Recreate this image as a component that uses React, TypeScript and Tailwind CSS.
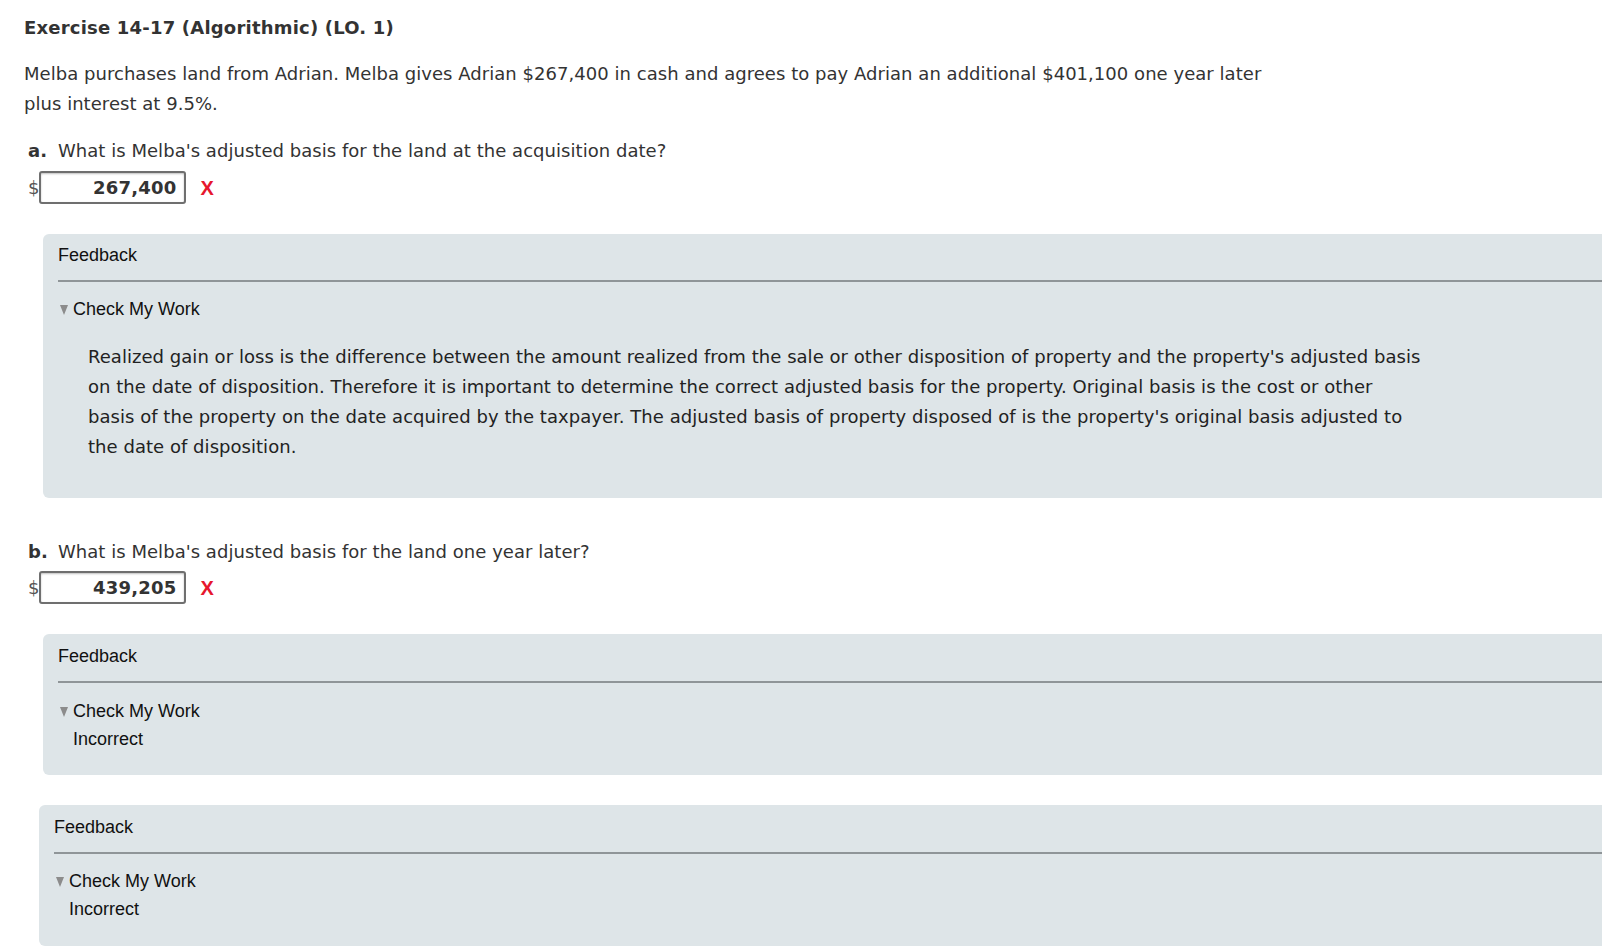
import React from "react";

const verdana = "font-['Verdana','DejaVu_Sans',sans-serif]";
const helv = "font-['Helvetica','Liberation_Sans',Arial,sans-serif]";

function Caret() {
  return (
    <svg width="8" height="10" viewBox="0 0 8 10" className="mr-[5px] mt-[1px] shrink-0">
      <polygon points="0,0 8,0 4,10" fill="#8c8c8c" />
    </svg>
  );
}

function AnswerInput({ value }: { value: string }) {
  return (
    <div className="flex items-center">
      <span className={`${verdana} text-[18px] text-[#555]`}>$</span>
      <div
        className={`${verdana} w-[147px] h-[33px] rounded-[3px] border-2 border-[#6f6f6f] bg-white shadow-[inset_0_1px_2px_rgba(0,0,0,0.25)] flex items-center justify-end pr-[8px] text-[18px] font-bold text-[#333] tracking-[0.2px]`}
      >
        {value}
      </div>
      <span className={`${helv} ml-[14px] text-[20px] font-bold text-[#e6172d]`}>X</span>
    </div>
  );
}

function Feedback({
  box,
  checkGap,
  children,
}: {
  box: string;
  checkGap: string;
  children: React.ReactNode;
}) {
  return (
    <div className={`${box} -mr-[40px] rounded-[6px] bg-[#dee5e8] pl-[15px]`}>
      <div className={`${helv} text-[18px] leading-[24px] text-[#111]`}>Feedback</div>
      <div className="mt-[13px] h-[2px] bg-[#8f9598]" />
      <div className={`${helv} ${checkGap} flex items-center text-[18px] leading-[28px] text-[#111]`}>
        <span className="ml-[2px]"></span>
        <Caret />
        Check My Work
      </div>
      {children}
    </div>
  );
}

export default function App() {
  return (
    <div className="min-h-[952px] w-full overflow-hidden bg-white pl-[24px] pt-[16px] text-[#333]">
      <h1 className={`${verdana} text-[18px] font-bold leading-[24px] tracking-[0.2px] text-[#333]`}>
        Exercise 14-17 (Algorithmic) (LO. 1)
      </h1>

      <p className={`${verdana} mt-[19px] text-[18px] leading-[30px] tracking-[0.04px] text-[#333]`}>
        Melba purchases land from Adrian. Melba gives Adrian $267,400 in cash and agrees to pay Adrian an additional $401,100 one year later
        <br />
        plus interest at 9.5%.
      </p>

      <div className={`${verdana} mt-[17px] pl-[4px] text-[18px] leading-[30px] tracking-[0.04px] text-[#333]`}>
        <span className="inline-block w-[30px] font-bold">a.</span>
        What is Melba's adjusted basis for the land at the acquisition date?
      </div>
      <div className="mt-[5px] pl-[4px]">
        <AnswerInput value="267,400" />
      </div>

      <div className="mt-[30px]">
        <Feedback box="ml-[19px] pt-[9px] pb-[36px]" checkGap="mt-[13px]">
          <div className={`${verdana} mt-[19px] pl-[30px] text-[18px] leading-[30px] tracking-[0.04px] text-[#222]`}>
            Realized gain or loss is the difference between the amount realized from the sale or other disposition of property and the property's adjusted basis
            <br />
            on the date of disposition. Therefore it is important to determine the correct adjusted basis for the property. Original basis is the cost or other
            <br />
            basis of the property on the date acquired by the taxpayer. The adjusted basis of property disposed of is the property's original basis adjusted to
            <br />
            the date of disposition.
          </div>
        </Feedback>
      </div>

      <div className={`${verdana} mt-[39px] pl-[4px] text-[18px] leading-[30px] tracking-[0.04px] text-[#333]`}>
        <span className="inline-block w-[30px] font-bold">b.</span>
        What is Melba's adjusted basis for the land one year later?
      </div>
      <div className="mt-[4px] pl-[4px]">
        <AnswerInput value="439,205" />
      </div>

      <div className="mt-[30px]">
        <Feedback box="ml-[19px] pt-[10px] pb-[22px]" checkGap="mt-[14px]">
          <div className={`${helv} pl-[15px] text-[18px] leading-[28px] text-[#111]`}>Incorrect</div>
        </Feedback>
      </div>

      <div className="mt-[30px]">
        <Feedback box="ml-[15px] pt-[10px] pb-[23px]" checkGap="mt-[13px]">
          <div className={`${helv} pl-[15px] text-[18px] leading-[28px] text-[#111]`}>Incorrect</div>
        </Feedback>
      </div>
    </div>
  );
}
